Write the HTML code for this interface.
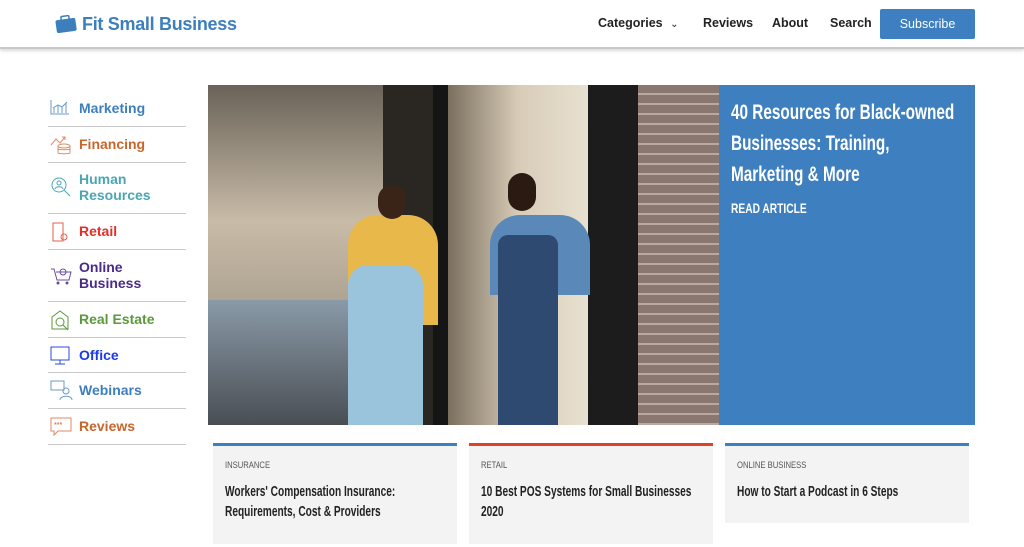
<!DOCTYPE html>
<html><head><meta charset="utf-8"><style>
*{margin:0;padding:0;box-sizing:border-box}
body{width:1024px;height:547px;overflow:hidden;background:#fff;font-family:"Liberation Sans",sans-serif;position:relative}
.hdr{position:absolute;left:0;top:0;width:1024px;height:49px;background:#fff;border-bottom:2px solid #c8c8c8;box-shadow:0 2px 3px rgba(0,0,0,.15)}
.logo{position:absolute;left:55px;top:14px;font-size:18px;font-weight:bold;color:#3d7fbd;letter-spacing:-.3px}
.logo svg{position:absolute;left:0;top:1px}
.logo span{position:absolute;left:27px;top:0;white-space:nowrap}
.nav{position:absolute;top:16px;font-size:12.5px;font-weight:bold;color:#222}
.btn{position:absolute;left:880px;top:9px;width:95px;height:30px;background:#3d7fc0;color:#fff;font-size:12.5px;text-align:center;line-height:30px;border-radius:2px}
.side{position:absolute;left:48px;width:138px;border-bottom:1px solid #c8c8c8;font-weight:bold;font-size:14px}
.side span{position:absolute;left:31px;line-height:16px}
.side svg{position:absolute;left:2px}
.hero{position:absolute;left:208px;top:85px;width:511px;height:340px;overflow:hidden;background:#8a8070}
.panel{position:absolute;left:719px;top:85px;width:256px;height:340px;background:#3e7fbf;color:#fff}
.cond{transform:scaleX(.73);transform-origin:0 0;white-space:nowrap}
.card{position:absolute;top:443px;width:244px;background:#f3f3f3;border-top:3px solid #3d7fbf}
.card .c{position:absolute;left:12px;top:14px;font-size:9px;color:#555;transform:scaleX(.85);transform-origin:0 0}
.card .t{position:absolute;left:12px;top:36px;font-size:14.5px;line-height:20px;color:#222;font-weight:bold;white-space:nowrap;transform:scaleX(.7);transform-origin:0 0}
</style></head><body>
<div class="hdr">
<div class="logo"><svg width="22" height="18" viewBox="0 0 22 18"><rect x="1" y="4" width="20" height="13" rx="2" fill="#3d7fbd" transform="rotate(-8 11 10)"/><rect x="7" y="1" width="8" height="4" rx="1" fill="none" stroke="#3d7fbd" stroke-width="1.5" transform="rotate(-8 11 10)"/></svg><span>Fit Small Business</span></div>
<div class="nav" style="left:598px">Categories <span style="font-weight:normal;font-size:10px;margin-left:4px">&#8964;</span></div>
<div class="nav" style="left:703px">Reviews</div>
<div class="nav" style="left:772px">About</div>
<div class="nav" style="left:830px">Search</div>
<div class="btn">Subscribe</div>
</div>

<div class="side" style="top:96px;height:31px;color:#3d7fbd"><svg style="top:3px" width="20" height="16"><path d="M1 1v14h18M4 14V9M8 14V7M12 14V8M16 14V4M3 9l5-3 4 2 5-5" stroke="#6a9ac8" fill="none"/></svg><span style="top:4px">Marketing</span></div>
<div class="side" style="top:127px;height:36px;color:#c8662c"><svg style="top:8px" width="22" height="20"><path d="M1 10l5-6 4 4 5-6M12 2h3v3" stroke="#e08a60" fill="none"/><ellipse cx="14" cy="11" rx="6" ry="2" stroke="#e08a60" fill="none"/><path d="M8 11v7c0 1 12 1 12 0v-7M8 14c0 1 12 1 12 0" stroke="#e08a60" fill="none"/></svg><span style="top:9px">Financing</span></div>
<div class="side" style="top:163px;height:51px;color:#4aa6b4"><svg style="top:13px" width="22" height="22"><circle cx="9" cy="9" r="7" stroke="#4aa6b4" fill="none"/><circle cx="9" cy="7" r="2" stroke="#4aa6b4" fill="none"/><path d="M5 13c1-3 7-3 8 0M14 14l6 6" stroke="#4aa6b4" fill="none"/></svg><span style="top:8px">Human<br>Resources</span></div>
<div class="side" style="top:214px;height:36px;color:#e0302a"><svg style="top:8px" width="20" height="22"><rect x="3" y="1" width="10" height="18" stroke="#e06050" fill="none"/><circle cx="14" cy="15" r="3" stroke="#e06050" fill="none"/></svg><span style="top:9px">Retail</span></div>
<div class="side" style="top:250px;height:52px;color:#4a2a8a"><svg style="top:14px" width="22" height="22"><path d="M1 5h3l3 11h12l2-8H6" stroke="#6a4aa0" fill="none"/><circle cx="13" cy="8" r="3" stroke="#6a4aa0" fill="none"/><circle cx="8" cy="19" r="1.5" fill="#6a4aa0"/><circle cx="17" cy="19" r="1.5" fill="#6a4aa0"/></svg><span style="top:9px">Online<br>Business</span></div>
<div class="side" style="top:302px;height:36px;color:#5a9a3a"><svg style="top:7px" width="22" height="22"><path d="M2 20V8l8-6 8 6v12z" stroke="#5a9a3a" fill="none"/><circle cx="10" cy="13" r="4" stroke="#5a9a3a" fill="none"/><path d="M13 16l5 5" stroke="#5a9a3a"/></svg><span style="top:9px">Real Estate</span></div>
<div class="side" style="top:338px;height:35px;color:#1a3ae8"><svg style="top:8px" width="22" height="20"><rect x="1" y="1" width="18" height="13" stroke="#2a4ae0" fill="none"/><path d="M10 14v4M5 18h10" stroke="#2a4ae0"/></svg><span style="top:9px">Office</span></div>
<div class="side" style="top:373px;height:36px;color:#3d7fbd"><svg style="top:7px" width="24" height="22"><rect x="1" y="1" width="13" height="9" stroke="#6a9ac8" fill="none"/><circle cx="16" cy="11" r="3" stroke="#6a9ac8" fill="none"/><path d="M10 20c0-5 12-5 12 0" stroke="#6a9ac8" fill="none"/></svg><span style="top:9px">Webinars</span></div>
<div class="side" style="top:409px;height:36px;color:#c8662c"><svg style="top:7px" width="24" height="22"><path d="M1 2h20v13H8l-4 4v-4H1z" stroke="#e08a60" fill="none"/><text x="4" y="11" font-size="7" fill="#e08a60">***</text></svg><span style="top:9px">Reviews</span></div>

<div class="hero">
<div style="position:absolute;left:0;top:0;width:175px;height:340px;background:linear-gradient(180deg,#6a6258 0%,#c8bca8 40%,#a89c8c 70%,#5a5a58 100%)"></div>
<div style="position:absolute;left:0;top:215px;width:175px;height:125px;background:linear-gradient(180deg,#8a9aa8,#4a4e54)"></div>
<div style="position:absolute;left:175px;top:0;width:50px;height:340px;background:#2a2622"></div>
<div style="position:absolute;left:225px;top:0;width:15px;height:340px;background:#151515"></div>
<div style="position:absolute;left:240px;top:0;width:140px;height:340px;background:linear-gradient(90deg,#7a6e5e,#d8ccb8 50%,#e8e0d0)"></div>
<div style="position:absolute;left:380px;top:0;width:50px;height:340px;background:#1c1c1c"></div>
<div style="position:absolute;left:430px;top:0;width:81px;height:340px;background:repeating-linear-gradient(180deg,#8a7870 0 8px,#b8aaa0 8px 10px)"></div>
<div style="position:absolute;left:140px;top:130px;width:90px;height:110px;background:#e8b84a;border-radius:30px 30px 0 0"></div>
<div style="position:absolute;left:140px;top:180px;width:75px;height:160px;background:#9ac4dc;border-radius:20px 20px 0 0"></div>
<div style="position:absolute;left:170px;top:100px;width:28px;height:34px;background:#3a2418;border-radius:14px"></div>
<div style="position:absolute;left:282px;top:130px;width:100px;height:80px;background:#5a88b8;border-radius:30px 30px 0 0"></div>
<div style="position:absolute;left:290px;top:150px;width:60px;height:190px;background:#2e4a70;border-radius:10px 10px 0 0"></div>
<div style="position:absolute;left:300px;top:88px;width:28px;height:38px;background:#2a1a12;border-radius:14px"></div>
</div>
<div class="panel">
<div class="cond" style="position:absolute;left:12px;top:12px;font-size:21px;line-height:31px;font-weight:bold">40 Resources for Black-owned<br>Businesses: Training,<br>Marketing &amp; More</div>
<div class="cond" style="position:absolute;left:12px;top:115px;font-size:14px;font-weight:bold">READ ARTICLE</div>
</div>

<div class="card" style="left:213px;height:101px"><div class="c">INSURANCE</div><div class="t">Workers' Compensation Insurance:<br>Requirements, Cost &amp; Providers</div></div>
<div class="card" style="left:469px;height:101px;border-top-color:#e0402a"><div class="c">RETAIL</div><div class="t">10 Best POS Systems for Small Businesses<br>2020</div></div>
<div class="card" style="left:725px;height:80px"><div class="c">ONLINE BUSINESS</div><div class="t">How to Start a Podcast in 6 Steps</div></div>
</body></html>
